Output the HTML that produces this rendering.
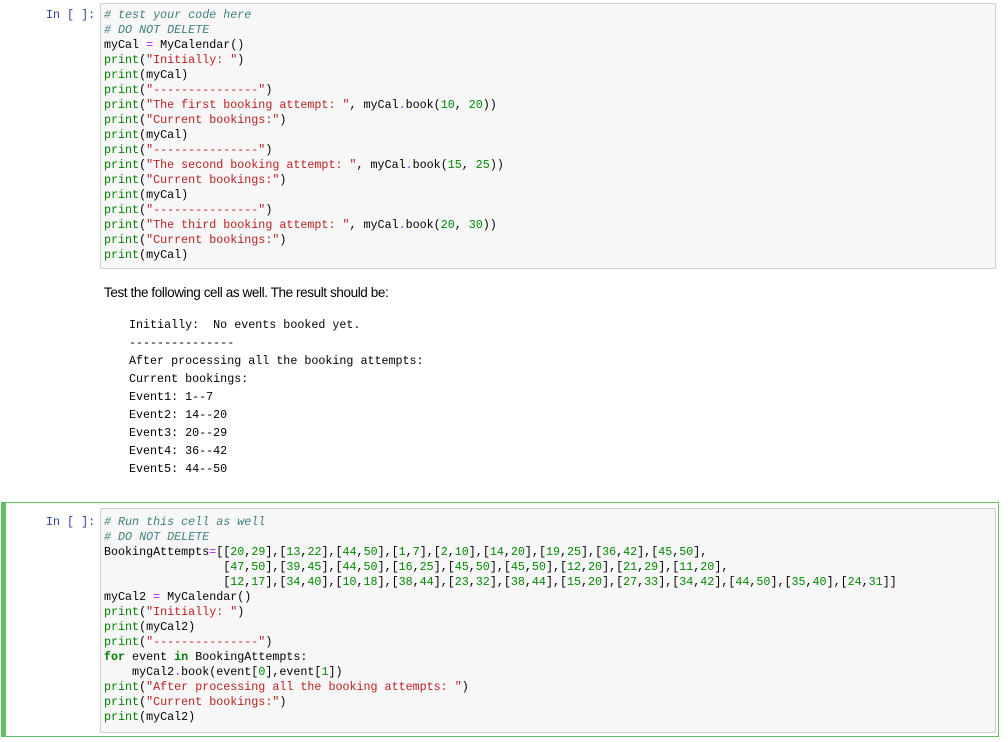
<!DOCTYPE html><html><head><style>
body{margin:0;width:1008px;height:742px;background:#fff;position:relative;overflow:hidden;font-family:"Liberation Mono",monospace}
.p{position:absolute;font-family:"Liberation Mono",monospace;font-size:11.7px;color:#303F9F;}
.box{position:absolute;background:#f7f7f7;border:1px solid #cfcfcf;border-radius:2px}
pre{position:absolute;margin:0;font-family:"Liberation Mono",monospace;font-size:11.7px;line-height:15px;color:#000}
.c{color:#408080;font-style:italic}.s{color:#BA2121}.k{color:#008000}.kb{color:#008000;font-weight:bold}.n{color:#080}.o{color:#AA22FF}
</style></head><body>
<div class="p" style="left:46px;top:8px">In [ ]:</div>
<div class="box" style="left:100px;top:3px;width:894px;height:264px"></div>
<pre style="left:104px;top:8px"><span class="c"># test your code here</span>
<span class="c"># DO NOT DELETE</span>
myCal <span class="o">=</span> MyCalendar()
<span class="k">print</span>(<span class="s">"Initially: "</span>)
<span class="k">print</span>(myCal)
<span class="k">print</span>(<span class="s">"---------------"</span>)
<span class="k">print</span>(<span class="s">"The first booking attempt: "</span>, myCal<span class="o">.</span>book(<span class="n">10</span>, <span class="n">20</span>))
<span class="k">print</span>(<span class="s">"Current bookings:"</span>)
<span class="k">print</span>(myCal)
<span class="k">print</span>(<span class="s">"---------------"</span>)
<span class="k">print</span>(<span class="s">"The second booking attempt: "</span>, myCal<span class="o">.</span>book(<span class="n">15</span>, <span class="n">25</span>))
<span class="k">print</span>(<span class="s">"Current bookings:"</span>)
<span class="k">print</span>(myCal)
<span class="k">print</span>(<span class="s">"---------------"</span>)
<span class="k">print</span>(<span class="s">"The third booking attempt: "</span>, myCal<span class="o">.</span>book(<span class="n">20</span>, <span class="n">30</span>))
<span class="k">print</span>(<span class="s">"Current bookings:"</span>)
<span class="k">print</span>(myCal)</pre>
<div style="position:absolute;left:104px;top:285px;font-family:'Liberation Sans',sans-serif;font-size:13.5px;letter-spacing:-0.4px;color:#000">Test the following cell as well. The result should be:</div>
<pre style="left:129px;top:316px;line-height:18px">Initially:  No events booked yet.
---------------
After processing all the booking attempts:
Current bookings:
Event1: 1--7
Event2: 14--20
Event3: 20--29
Event4: 36--42
Event5: 44--50</pre>
<div style="position:absolute;left:1px;top:502px;border:1px solid #66bb6a;border-left:5px solid #66bb6a;box-sizing:border-box;width:998px;height:235px"></div>
<div class="p" style="left:46px;top:515px">In [ ]:</div>
<div class="box" style="left:100px;top:508px;width:894px;height:223px"></div>
<pre style="left:104px;top:515px"><span class="c"># Run this cell as well</span>
<span class="c"># DO NOT DELETE</span>
BookingAttempts<span class="o">=</span>[[<span class="n">20</span>,<span class="n">29</span>],[<span class="n">13</span>,<span class="n">22</span>],[<span class="n">44</span>,<span class="n">50</span>],[<span class="n">1</span>,<span class="n">7</span>],[<span class="n">2</span>,<span class="n">10</span>],[<span class="n">14</span>,<span class="n">20</span>],[<span class="n">19</span>,<span class="n">25</span>],[<span class="n">36</span>,<span class="n">42</span>],[<span class="n">45</span>,<span class="n">50</span>],
                 [<span class="n">47</span>,<span class="n">50</span>],[<span class="n">39</span>,<span class="n">45</span>],[<span class="n">44</span>,<span class="n">50</span>],[<span class="n">16</span>,<span class="n">25</span>],[<span class="n">45</span>,<span class="n">50</span>],[<span class="n">45</span>,<span class="n">50</span>],[<span class="n">12</span>,<span class="n">20</span>],[<span class="n">21</span>,<span class="n">29</span>],[<span class="n">11</span>,<span class="n">20</span>],
                 [<span class="n">12</span>,<span class="n">17</span>],[<span class="n">34</span>,<span class="n">40</span>],[<span class="n">10</span>,<span class="n">18</span>],[<span class="n">38</span>,<span class="n">44</span>],[<span class="n">23</span>,<span class="n">32</span>],[<span class="n">38</span>,<span class="n">44</span>],[<span class="n">15</span>,<span class="n">20</span>],[<span class="n">27</span>,<span class="n">33</span>],[<span class="n">34</span>,<span class="n">42</span>],[<span class="n">44</span>,<span class="n">50</span>],[<span class="n">35</span>,<span class="n">40</span>],[<span class="n">24</span>,<span class="n">31</span>]]
myCal2 <span class="o">=</span> MyCalendar()
<span class="k">print</span>(<span class="s">"Initially: "</span>)
<span class="k">print</span>(myCal2)
<span class="k">print</span>(<span class="s">"---------------"</span>)
<span class="kb">for</span> event <span class="kb">in</span> BookingAttempts:
    myCal2<span class="o">.</span>book(event[<span class="n">0</span>],event[<span class="n">1</span>])
<span class="k">print</span>(<span class="s">"After processing all the booking attempts: "</span>)
<span class="k">print</span>(<span class="s">"Current bookings:"</span>)
<span class="k">print</span>(myCal2)</pre>
</body></html>
